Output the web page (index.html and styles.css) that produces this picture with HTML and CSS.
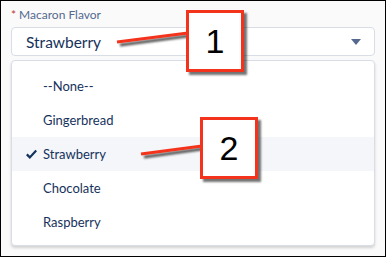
FILE: index.html
```html
<!DOCTYPE html>
<html>
<head>
<meta charset="utf-8">
<link rel="stylesheet" href="styles.css">
</head>
<body>
<div class="frame">
  <div class="label"><span class="req">*</span>Macaron Flavor</div>
  <div class="input">
    <span class="value">Strawberry</span>
    <svg class="caret" width="10" height="6" viewBox="0 0 10 6"><path d="M0 0 H10 L5 6 Z" fill="#54698d"/></svg>
  </div>
  <div class="dropdown">
    <div class="item"><span class="spacer"></span>--None--</div>
    <div class="item"><span class="spacer"></span>Gingerbread</div>
    <div class="item selected"><svg class="check" width="11" height="10" viewBox="0 0 11 10"><path d="M0.8 5.4 L3.8 8.4 L10.2 1.6" fill="none" stroke="#16325c" stroke-width="2.2"/></svg>Strawberry</div>
    <div class="item"><span class="spacer"></span>Chocolate</div>
    <div class="item"><span class="spacer"></span>Raspberry</div>
  </div>

  <svg class="lines" width="386" height="257" viewBox="0 0 386 257">
    <defs>
      <filter id="sh" x="-20%" y="-200%" width="140%" height="500%">
        <feGaussianBlur stdDeviation="1"/>
      </filter>
    </defs>
    <line x1="120" y1="45" x2="188" y2="36" stroke="#555" stroke-width="3" filter="url(#sh)"/>
    <line x1="117" y1="42" x2="188" y2="33" stroke="#f4331c" stroke-width="3"/>
    <line x1="144" y1="157" x2="202" y2="149" stroke="#555" stroke-width="3" filter="url(#sh)"/>
    <line x1="141" y1="154" x2="202" y2="146" stroke="#f4331c" stroke-width="3"/>
  </svg>
  <div class="callout c1">1</div>
  <div class="callout c2">2</div>
</div>
</body>
</html>
```
FILE: styles.css
```css
html, body {
  margin: 0;
  padding: 0;
}
.frame {
  position: relative;
  width: 386px;
  height: 257px;
  box-sizing: border-box;
  border: 1px solid #000;
  background: #fafafb;
  padding: 6px 10px 0 10px;
  font-family: Lato, "Open Sans", "Liberation Sans", sans-serif;
  overflow: hidden;
}
.label {
  font-size: 12px;
  line-height: 16px;
  color: #54698d;
  height: 16px;
  margin-bottom: 4px;
}
.req {
  color: #c23934;
  margin-right: 3px;
}
.input {
  height: 29px;
  box-sizing: border-box;
  border: 1px solid #d8dde6;
  border-radius: 4px;
  background: #fff;
  display: flex;
  align-items: center;
  justify-content: space-between;
  padding: 0 13px 0 14px;
}
.value {
  font-size: 15.5px;
  color: #16325c;
}
.dropdown {
  margin-top: 4px;
  border: 1px solid #d8dde6;
  border-radius: 4px;
  background: #fff;
  box-shadow: 0 2px 3px rgba(0, 0, 0, 0.16);
  padding: 8px 0 6px 0;
}
.item {
  height: 34px;
  display: flex;
  align-items: center;
  padding-left: 14px;
  font-size: 13px;
  color: #16325c;
}
.check,
.spacer {
  width: 11px;
  margin-right: 6px;
  flex: none;
}
.item.selected {
  background: #f4f6f9;
}
.lines {
  position: absolute;
  left: -1px;
  top: -1px;
}
.callout {
  position: absolute;
  width: 58px;
  height: 62px;
  box-sizing: border-box;
  border: 3px solid #f4331c;
  background: #fff;
  box-shadow: 3px 3px 2px rgba(0, 0, 0, 0.55);
  display: flex;
  align-items: center;
  justify-content: center;
  font-family: "Liberation Sans", Arial, sans-serif;
  font-size: 34px;
  color: #000;
}
.c1 {
  left: 185px;
  top: 9px;
}
.c2 {
  left: 199px;
  top: 116px;
}
```
